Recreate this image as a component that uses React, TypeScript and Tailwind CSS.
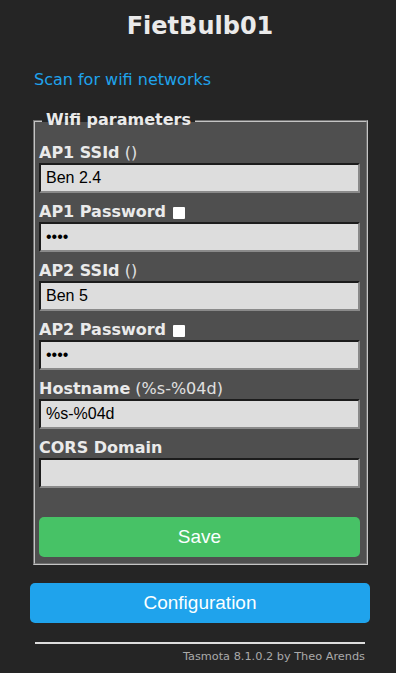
import React from "react";

const sans = { fontFamily: '"Liberation Sans", Arial, sans-serif' };

const Label = ({ bold, extra, checkbox }: { bold: string; extra?: string; checkbox?: boolean }) => (
  <div className="flex items-center h-[20px] whitespace-pre text-[16px] leading-[20px]">
    <b className="font-bold text-[#eaeaea]">{bold}</b>
    {extra !== undefined && <span className="text-[#e0e0e0]">{" " + extra}</span>}
    {checkbox && <span className="inline-block w-[12px] h-[12px] bg-white ml-[7px] mt-[1px] rounded-[1px]" />}
  </div>
);

const Field = ({ value }: { value: string }) => (
  <div
    className="h-[30px] bg-[#dddddd] border-2 border-t-[#1c1c1c] border-l-[#1c1c1c] border-r-[#8a8a8a] border-b-[#8a8a8a] flex items-center px-[5px] text-[16px] text-black"
    style={sans}
  >
    {value}
  </div>
);

export default function App() {
  return (
    <div className="min-h-[673px] w-[396px] bg-[#252525] text-[#eaeaea]" style={{ fontFamily: '"DejaVu Sans", Verdana, sans-serif' }}>
      <div className="w-[340px] ml-[30px] pt-[11px]">
        <h2 className="text-center font-bold text-[24px] leading-[30px] text-[#eaeaea]">FietBulb01</h2>
        <div className="mt-[29px] pl-[4px] text-[16px] leading-[20px] text-[#1fa3ec]">Scan for wifi networks</div>
        <div className="relative mt-[30px] ml-[3px] mr-[2px] bg-[#4f4f4f] border-2 border-[#c4c4c4] [border-style:groove] pl-[4px] pr-[6px] pt-[21px] pb-[6px]">
          <div className="absolute left-[7px] top-[-12px] px-[4px] leading-[20px] font-bold text-[16px] text-[#eaeaea]">
            <span className="absolute inset-x-0 top-0 h-[12px] bg-[#252525]" />
            <span className="absolute inset-x-0 bottom-0 top-[12px] bg-[#4f4f4f]" />
            <span className="relative">Wifi parameters</span>
          </div>
          <div className="flex flex-col">
            <Label bold="AP1 SSId" extra="()" />
            <Field value="Ben 2.4" />
            <div className="mt-[9px]"><Label bold="AP1 Password" checkbox /></div>
            <Field value="••••" />
            <div className="mt-[9px]"><Label bold="AP2 SSId" extra="()" /></div>
            <Field value="Ben 5" />
            <div className="mt-[9px]"><Label bold="AP2 Password" checkbox /></div>
            <Field value="••••" />
            <div className="mt-[9px]"><Label bold="Hostname" extra="(%s-%04d)" /></div>
            <Field value="%s-%04d" />
            <div className="mt-[9px]"><Label bold="CORS Domain" /></div>
            <Field value="" />
            <button className="mt-[29px] h-[40px] rounded-[5px] bg-[#47c266] text-[#faffff] text-[19px]" style={sans}>Save</button>
          </div>
        </div>
        <button className="mt-[18px] w-full h-[40px] rounded-[5px] bg-[#1fa3ec] text-[#faffff] text-[19px]" style={sans}>Configuration</button>
        <div className="mt-[19px] mx-[5px] h-[2px] bg-[#dddddd]" />
        <div className="mt-[6px] pr-[5px] text-right text-[11.3px] leading-[14px] text-[#aaaaaa]">Tasmota 8.1.0.2 by Theo Arends</div>
      </div>
    </div>
  );
}
